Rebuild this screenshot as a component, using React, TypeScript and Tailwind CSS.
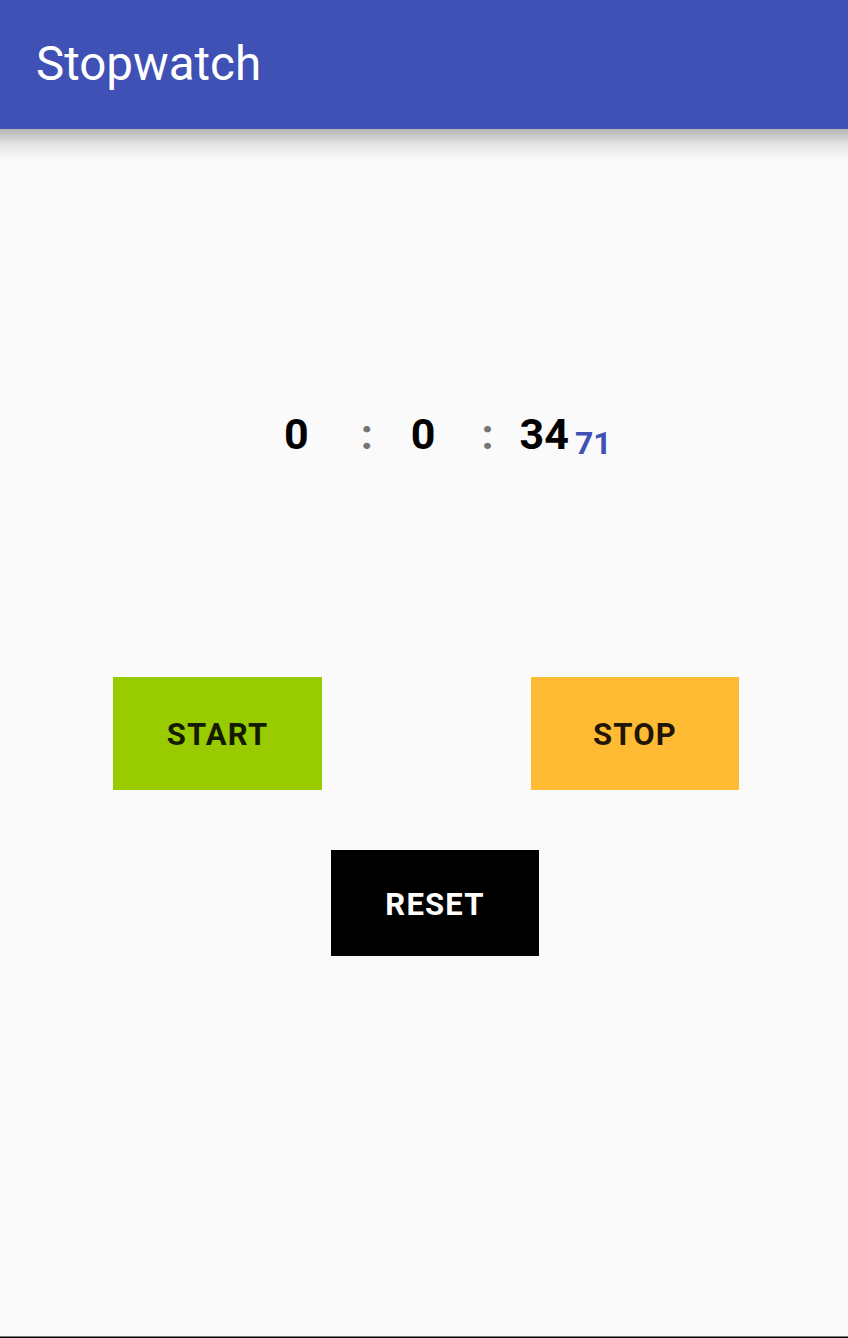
import React from 'react';

export default function App() {
  return (
    <div className="h-[1338px] flex flex-col bg-[#fafafa] overflow-hidden" style={{ fontFamily: 'Roboto, "Noto Sans", sans-serif' }}>
      <header className="h-[129px] shrink-0 bg-[#3f51b5] flex items-center pl-[36px]">
        <h1 className="text-white text-[47.5px] font-normal leading-none">Stopwatch</h1>
      </header>
      <div className="h-[32px] shrink-0 bg-linear-to-b from-[#b4b4b4] via-[#e6e6e6] to-[#fafafa]" />

      <main className="flex-1 flex flex-col">
        <div className="mt-[252px] flex items-baseline pl-[284px] font-bold text-[43px] leading-none">
          <span className="text-black">0</span>
          <span className="ml-[52px] text-[#757575]">:</span>
          <span className="ml-[38px] text-black">0</span>
          <span className="ml-[46px] text-[#757575]">:</span>
          <span className="ml-[26px] text-black">34</span>
          <span className="ml-[6px] text-[32px] text-[#3f51b5] relative top-[5px]">71</span>
        </div>

        <div className="mt-[221px] flex justify-between pl-[113px] pr-[109px]">
          <button className="w-[209px] h-[113px] pt-[4px] bg-[#99cc00] text-[#151b00] text-[31px] font-bold tracking-[1.2px]">
            START
          </button>
          <button className="w-[208px] h-[113px] pt-[4px] bg-[#ffbb33] text-[#1f1606] text-[31px] font-bold tracking-[1.2px]">
            STOP
          </button>
        </div>

        <div className="mt-[60px] pl-[331px]">
          <button className="w-[208px] h-[106px] pt-[4px] bg-black text-white text-[31px] font-bold tracking-[1.2px]">
            RESET
          </button>
        </div>
      </main>

      <div className="h-[2px] shrink-0 border-t border-[#7a7a7a] bg-black" />
    </div>
  );
}
